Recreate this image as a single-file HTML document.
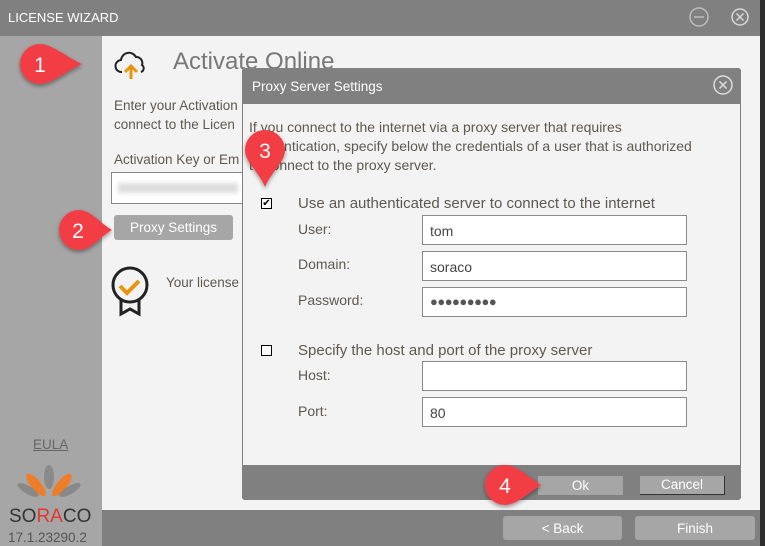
<!DOCTYPE html>
<html><head><style>
body{margin:0;width:765px;height:546px;position:relative;overflow:hidden;background:#2d2d2d;font-family:"Liberation Sans",sans-serif;color:#5e5850}
div,span{position:absolute;box-sizing:border-box}
.t{white-space:nowrap;font-size:13.5px}
.l{font-size:14px}
.inp{background:#fff;border:1px solid #8a8a8a;left:422px;width:265px;height:30px;padding:7px 0 0 7px;font-size:14px;color:#444}
.btn{background:#a6a6a6;color:#fff;font-size:13.5px;text-align:center}
</style></head><body>
<div style="left:0;top:0;width:760px;height:36px;background:#808080"></div>
<div class="t" style="left:8px;top:10px;color:#fff;font-size:13px">LICENSE WIZARD</div>
<svg style="position:absolute;left:688px;top:6px" width="66" height="22"><circle cx="11" cy="11" r="9" fill="none" stroke="#bdbdbd" stroke-width="1.5"/><line x1="6" y1="11" x2="16" y2="11" stroke="#bdbdbd" stroke-width="1.5"/><circle cx="52" cy="11" r="8" fill="none" stroke="#d8d8d8" stroke-width="1.5"/><path d="M48.5 7.5l7 7M55.5 7.5l-7 7" stroke="#d8d8d8" stroke-width="1.5"/></svg>
<div style="left:0;top:36px;width:102px;height:510px;background:#a6a6a6"></div>
<div style="left:102px;top:36px;width:658px;height:474px;background:#f3f3f3"></div>
<div style="left:102px;top:510px;width:658px;height:36px;background:#808080"></div>
<div class="btn" style="left:503px;top:516px;width:119px;height:24px;padding-top:5px;border-radius:3px">&lt; Back</div>
<div class="btn" style="left:635px;top:516px;width:120px;height:24px;padding-top:5px;border-radius:3px">Finish</div>

<div class="t" style="left:33px;top:437px;text-decoration:underline;color:#666">EULA</div>
<svg style="position:absolute;left:14px;top:465px" width="70" height="36"><ellipse cx="35" cy="12" rx="5" ry="12" fill="#8a8a8a"/><ellipse cx="22" cy="20" rx="5" ry="14" transform="rotate(-40 22 20)" fill="#ee7d2a"/><ellipse cx="48" cy="20" rx="5" ry="14" transform="rotate(40 48 20)" fill="#ee7d2a"/><ellipse cx="14" cy="25" rx="4" ry="12" transform="rotate(-60 14 25)" fill="#888"/><ellipse cx="56" cy="25" rx="4" ry="12" transform="rotate(60 56 25)" fill="#888"/></svg>
<div class="t" style="left:9px;top:506px;font-size:19px;color:#333">SO<span style="position:static;color:#e2372c">RA</span>CO</div>
<div class="t" style="left:8px;top:530px;color:#555;font-size:13.5px">17.1.23290.2</div>

<svg style="position:absolute;left:113px;top:48px" width="36" height="32"><path d="M9 24a6 6 0 0 1-1-12 8 8 0 0 1 15-3 6 6 0 0 1 6 8 4 4 0 0 1-1 7" fill="none" stroke="#222" stroke-width="2"/><path d="M18 31V19M12 24l6-6 6 6" fill="none" stroke="#e8950e" stroke-width="3"/></svg>
<div class="t" style="left:173px;top:48px;font-size:24px;color:#777">Activate Online</div>
<div class="t" style="left:114px;top:98px">Enter your Activation</div>
<div class="t" style="left:114px;top:117px">connect to the Licen</div>
<div class="t" style="left:114px;top:152px">Activation Key or Em</div>
<div style="left:111px;top:172px;width:135px;height:32px;background:#fff;border:1px solid #888"><div style="left:6px;top:10px;width:120px;height:10px;background:#ddd;filter:blur(2px)"></div></div>
<div class="btn" style="left:114px;top:215px;width:119px;height:25px;padding-top:5px;border-radius:3px">Proxy Settings</div>
<svg style="position:absolute;left:110px;top:266px" width="42" height="52"><circle cx="20" cy="19" r="17" fill="none" stroke="#222" stroke-width="3"/><path d="M10 20l7 7 12-12" fill="none" stroke="#e8950e" stroke-width="4"/><path d="M11 34v14l9-5 9 5V34" fill="none" stroke="#222" stroke-width="3"/></svg>
<div class="t" style="left:166px;top:275px">Your license</div>

<div style="left:242px;top:68px;width:499px;height:432px;background:#f3f3f3;border:1px solid #808080;border-radius:3px"></div>
<div style="left:242px;top:68px;width:499px;height:36px;background:#808080;border-radius:3px 3px 0 0"></div>
<div class="t" style="left:252px;top:79px;color:#fff">Proxy Server Settings</div>
<svg style="position:absolute;left:712px;top:74px" width="22" height="22"><circle cx="11" cy="11" r="9" fill="none" stroke="#ddd" stroke-width="1.5"/><path d="M7.5 7.5l7 7M14.5 7.5l-7 7" stroke="#ddd" stroke-width="1.5"/></svg>
<div class="t" style="left:249px;top:119px;font-size:14px">If you connect to the internet via a proxy server that requires</div>
<div class="t" style="left:249px;top:138px;font-size:14px">authentication, specify below the credentials of a user that is authorized</div>
<div class="t" style="left:249px;top:157px;font-size:14px">to connect to the proxy server.</div>
<div style="left:261px;top:198px;width:11px;height:11px;border:1px solid #000;background:#fff;font-size:10px;line-height:9px;color:#000;text-align:center">✔</div>
<div class="t l" style="left:298px;top:195px;font-size:15px">Use an authenticated server to connect to the internet</div>
<div class="t l" style="left:298px;top:221px">User:</div>
<div class="t l" style="left:298px;top:256px">Domain:</div>
<div class="t l" style="left:298px;top:292px">Password:</div>
<div class="inp" style="top:215px">tom</div>
<div class="inp" style="top:251px">soraco</div>
<div class="inp" style="top:287px;font-size:13px;letter-spacing:-0.5px;padding-top:6px;color:#555">●●●●●●●●●</div>
<div style="left:261px;top:345px;width:11px;height:11px;border:1px solid #000;background:#fff"></div>
<div class="t l" style="left:298px;top:342px;font-size:15px">Specify the host and port of the proxy server</div>
<div class="t l" style="left:298px;top:367px">Host:</div>
<div class="t l" style="left:298px;top:403px">Port:</div>
<div class="inp" style="top:361px"></div>
<div class="inp" style="top:397px">80</div>
<div style="left:242px;top:465px;width:499px;height:35px;background:#808080;border-radius:0 0 3px 3px"></div>
<div class="btn" style="left:538px;top:476px;width:85px;height:19px;padding-top:2px">Ok</div>
<div class="btn" style="left:640px;top:476px;width:85px;height:19px;padding-top:1px;border-right:1px solid #333;border-bottom:1px solid #333">Cancel</div>

<svg style="position:absolute;left:0;top:0" width="765" height="546">
<defs><filter id="s"><feDropShadow dx="0" dy="2" stdDeviation="2" flood-opacity="0.4"/></filter></defs>
<g fill="#f33e45" filter="url(#s)">
<path d="M40 44a20 20 0 1 0 0 40c12 0 28-14 42-20c-14-6-30-20-42-20z"/>
<path d="M79 210a20 20 0 1 0 0 40c12 0 22-14 33-20c-11-6-21-20-33-20z"/>
<path d="M265 130a20 20 0 0 0-20 20c0 12 14 22 20 37c6-15 20-25 20-37a20 20 0 0 0-20-20z"/>
<path d="M505 465a20 20 0 1 0 0 40c12 0 26-14 36-20c-10-6-24-20-36-20z"/>
</g>
<g fill="#fff" font-family="Liberation Sans" font-size="21" text-anchor="middle">
<text x="40" y="72">1</text><text x="78" y="238">2</text><text x="265" y="158">3</text><text x="505" y="493">4</text></g>
</svg>
</body></html>
